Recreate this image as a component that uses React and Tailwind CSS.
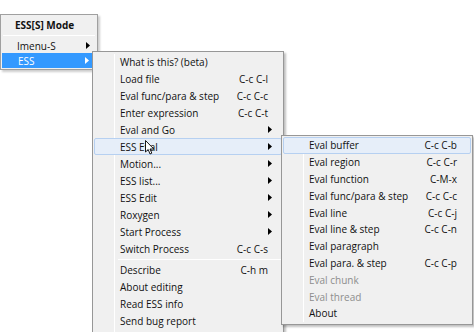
const font = { fontFamily: '"Open Sans", "Noto Sans", sans-serif' }

const essItems = [
  { label: "What is this? (beta)" },
  { label: "Load file", key: "C-c C-l" },
  { label: "Eval func/para & step", key: "C-c C-c" },
  { label: "Enter expression", key: "C-c C-t" },
  { label: "Eval and Go", sub: true },
  { label: "ESS Eval", sub: true, hot: true },
  { label: "Motion...", sub: true },
  { label: "ESS list...", sub: true },
  { label: "ESS Edit", sub: true },
  { label: "Roxygen", sub: true },
  { label: "Start Process", sub: true },
  { label: "Switch Process", key: "C-c C-s" },
  { sep: true },
  { label: "Describe", key: "C-h m" },
  { label: "About editing" },
  { label: "Read ESS info" },
  { label: "Send bug report" },
]

const evalItems = [
  { label: "Eval buffer", key: "C-c C-b", hot: true },
  { label: "Eval region", key: "C-c C-r" },
  { label: "Eval function", key: "C-M-x" },
  { label: "Eval func/para & step", key: "C-c C-c" },
  { label: "Eval line", key: "C-c C-j" },
  { label: "Eval line & step", key: "C-c C-n" },
  { label: "Eval paragraph" },
  { label: "Eval para. & step", key: "C-c C-p" },
  { label: "Eval chunk", off: true },
  { label: "Eval thread", off: true },
  { label: "About" },
]

function Arrow({ white }) {
  return (
    <svg width="4" height="7" viewBox="0 0 4 7" className="shrink-0">
      <path d="M0 0 L4 3.5 L0 7 Z" fill={white ? "#fff" : "#000"} />
    </svg>
  )
}

function Row({ item, tight }) {
  if (item.sep) {
    return (
      <div className="h-[4px] flex items-center pl-[25px] pr-[2px]">
        <div className="w-full h-px bg-[#e0e0e0] border-b border-white" />
      </div>
    )
  }
  return (
    <div
      className={`${tight ? "h-[16.8px]" : "h-[17px]"} flex items-center pl-[25px] pr-[9px] mx-[1px] rounded-[2px] border ${
        item.hot ? "bg-[#e6eef9] border-[#b6d0f1]" : "border-transparent"
      } ${item.off ? "text-[#8d8d8d]" : "text-[#111]"}`}
    >
      <span className="flex-1 whitespace-nowrap">{item.label}</span>
      {item.key && <span className="whitespace-nowrap mr-[4px]">{item.key}</span>}
      {item.sub && <Arrow />}
    </div>
  )
}

function Menu({ items, tight, className }) {
  return (
    <div className={`absolute bg-[#f0f0f0] border border-[#979797] shadow-[2px_2px_2px_rgba(0,0,0,0.25)] py-[1px] ${className}`}>
      <div className="absolute top-[2px] bottom-[2px] left-[21px] w-px bg-[#e2e3e3] border-r border-white" />
      <div className="relative">
        {items.map((it, i) => (
          <Row key={i} item={it} tight={tight} />
        ))}
      </div>
    </div>
  )
}

export default function App() {
  return (
    <div className="relative w-[474px] h-[332px] bg-white overflow-hidden text-[10px] leading-none" style={font}>
      {/* top menu */}
      <div className="absolute left-0 top-[14px] w-[98px] h-[56px] bg-[#f0f0f0] border border-[#a0a0a0] shadow-[2px_2px_2px_rgba(0,0,0,0.2)] pt-[2px]">
        <div className="h-[16px] flex items-center pl-[14px] font-bold text-[#111]">ESS[S] Mode</div>
        <div className="h-[5px] flex items-center px-[2px]">
          <div className="w-full h-px bg-[#c8c8c8] border-b border-white" />
        </div>
        <div className="h-[15px] flex items-center pl-[16px] pr-[7px] text-[#111]">
          <span className="flex-1">Imenu-S</span>
          <Arrow />
        </div>
        <div className="h-[15px] flex items-center pl-[16px] pr-[7px] mx-[1px] bg-[#3399ff] text-white">
          <span className="flex-1">ESS</span>
          <Arrow white />
        </div>
      </div>

      <Menu items={essItems} className="left-[92px] top-[51px] w-[192px] h-[284px]" />
      <Menu items={evalItems} tight className="left-[281px] top-[135px] w-[192px] h-[190px]" />

      {/* mouse pointer */}
      <svg className="absolute left-[145px] top-[140px]" width="10" height="16" viewBox="0 0 10 16">
        <path d="M0.5 0.5 L0.5 12 L3.2 9.5 L5 14 L6.8 13.2 L5 9 L8.8 9 Z" fill="#fff" stroke="#000" strokeWidth="0.9" strokeLinejoin="round" />
      </svg>
    </div>
  )
}
